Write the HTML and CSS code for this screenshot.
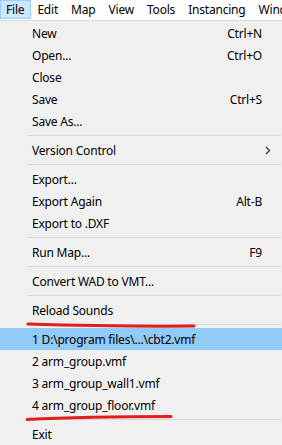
FILE: index.html
```html
<!DOCTYPE html>
<html lang="en">
<head>
  <meta charset="UTF-8">
  <title>File menu</title>
  <link rel="stylesheet" href="styles.css">
</head>
<body>
  <nav class="menubar">
    <span class="menubar-item active">File</span>
    <span class="menubar-item">Edit</span>
    <span class="menubar-item">Map</span>
    <span class="menubar-item">View</span>
    <span class="menubar-item">Tools</span>
    <span class="menubar-item">Instancing</span>
    <span class="menubar-item">Window</span>
  </nav>

  <div class="dropdown">
    <div class="item"><span>New</span><span class="key">Ctrl+N</span></div>
    <div class="item"><span>Open...</span><span class="key">Ctrl+O</span></div>
    <div class="item"><span>Close</span></div>
    <div class="item"><span>Save</span><span class="key">Ctrl+S</span></div>
    <div class="item"><span>Save As...</span></div>
    <div class="sep"></div>
    <div class="item"><span>Version Control</span>
      <svg class="chevron" width="6" height="9" viewBox="0 0 6 9"><path d="M1 1 L4.5 4.5 L1 8" fill="none" stroke="#333" stroke-width="1.3"/></svg>
    </div>
    <div class="sep"></div>
    <div class="item"><span>Export...</span></div>
    <div class="item"><span>Export Again</span><span class="key">Alt-B</span></div>
    <div class="item"><span>Export to .DXF</span></div>
    <div class="sep"></div>
    <div class="item"><span>Run Map...</span><span class="key">F9</span></div>
    <div class="sep"></div>
    <div class="item"><span>Convert WAD to VMT...</span></div>
    <div class="sep"></div>
    <div class="item"><span>Reload Sounds</span></div>
    <div class="sep"></div>
    <div class="item hover"><span>1 D:\program files\...\cbt2.vmf</span></div>
    <div class="item"><span>2 arm_group.vmf</span></div>
    <div class="item"><span>3 arm_group_wall1.vmf</span></div>
    <div class="item"><span>4 arm_group_floor.vmf</span></div>
    <div class="sep"></div>
    <div class="item"><span>Exit</span></div>

    <!-- hand drawn marks -->
    <svg class="mark mark-reload" width="172" height="8" viewBox="0 0 172 8">
      <path d="M2 3 C 50 4.5, 110 5.5, 168 5" fill="none" stroke="#e11d1d" stroke-width="3" stroke-linecap="round"/>
    </svg>
    <svg class="mark mark-floor" width="150" height="8" viewBox="0 0 150 8">
      <path d="M2 5.5 C 40 3.5, 100 2.5, 146 2.5" fill="none" stroke="#e11d1d" stroke-width="3" stroke-linecap="round"/>
    </svg>
  </div>
</body>
</html>
```

FILE: styles.css
```css
* {
  box-sizing: border-box;
  margin: 0;
  padding: 0;
}

body {
  font-family: 'Noto Sans', 'Open Sans', Arial, sans-serif;
  font-size: 12px;
  letter-spacing: -0.2px;
  color: #000;
  background-color: #f0f0f0;
  width: 282px;
  height: 445px;
  overflow: hidden;
}

.menubar {
  display: flex;
  height: 20px;
  background-color: #fff;
  white-space: nowrap;
  overflow: hidden;
}

.menubar-item {
  padding: 0 6px 0 5px;
  line-height: 18px;
  height: 19px;
  border: 1px solid transparent;
  flex-shrink: 0;
}

.menubar-item.active {
  background-color: #cce8ff;
  border-color: #99d1ff;
}

.dropdown {
  position: relative;
  border-top: 1px solid #dadada;
  padding-top: 1px;
}

.item {
  display: flex;
  align-items: center;
  justify-content: space-between;
  height: 22px;
  padding: 0 20px 0 32px;
  white-space: nowrap;
}

.item.hover {
  background-color: #91c9f7;
}

.chevron {
  margin-right: -9px;
}

.sep {
  height: 7px;
  margin-left: 28px;
  margin-right: 1px;
  position: relative;
}

.sep::after {
  content: '';
  position: absolute;
  left: 0;
  right: 0;
  top: 3px;
  border-top: 1px solid #d7d7d7;
}

.mark {
  position: absolute;
}

.mark-reload {
  left: 26px;
  top: 300px;
}

.mark-floor {
  left: 25px;
  top: 393px;
}
```
